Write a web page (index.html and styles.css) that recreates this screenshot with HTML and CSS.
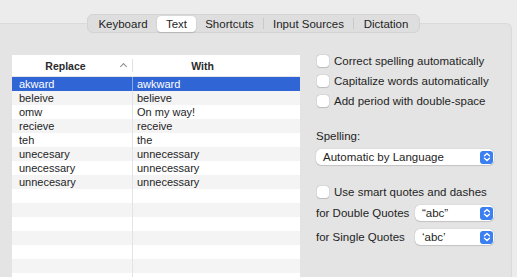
FILE: index.html
```html
<!DOCTYPE html>
<html>
<head>
  <title>Keyboard - Text</title>
  <link rel="stylesheet" href="styles.css">
</head>
<body>

  <!--TAB BAR-->
  <div class="tab-row">
    <div class="segmented">
      <span class="seg seg-keyboard">Keyboard</span>
      <span class="seg seg-text selected">Text</span>
      <span class="seg seg-shortcuts">Shortcuts</span>
      <span class="seg seg-input divided">Input Sources</span>
      <span class="seg seg-dictation divided">Dictation</span>
    </div>
  </div>

  <!--PANEL-->
  <div class="panel">

    <!-- Replacement table -->
    <div class="table">
      <div class="table-head">
        <div class="head-cell head-replace">Replace <span class="sort-arrow"></span></div>
        <div class="head-cell head-with">With</div>
      </div>
      <div class="row selected-row"><div class="cell">akward</div><div class="cell">awkward</div></div>
      <div class="row"><div class="cell">beleive</div><div class="cell">believe</div></div>
      <div class="row"><div class="cell">omw</div><div class="cell">On my way!</div></div>
      <div class="row"><div class="cell">recieve</div><div class="cell">receive</div></div>
      <div class="row"><div class="cell">teh</div><div class="cell">the</div></div>
      <div class="row"><div class="cell">unecesary</div><div class="cell">unnecessary</div></div>
      <div class="row"><div class="cell">unecessary</div><div class="cell">unnecessary</div></div>
      <div class="row"><div class="cell">unnecesary</div><div class="cell">unnecessary</div></div>
      <div class="row"><div class="cell"></div><div class="cell"></div></div>
      <div class="row"><div class="cell"></div><div class="cell"></div></div>
      <div class="row"><div class="cell"></div><div class="cell"></div></div>
      <div class="row"><div class="cell"></div><div class="cell"></div></div>
      <div class="row"><div class="cell"></div><div class="cell"></div></div>
      <div class="row"><div class="cell"></div><div class="cell"></div></div>
      <div class="row"><div class="cell"></div><div class="cell"></div></div>
    </div>

    <!-- Options on the right -->
    <div class="options">
      <div class="check-row"><span class="checkbox"></span>Correct spelling automatically</div>
      <div class="check-row"><span class="checkbox"></span>Capitalize words automatically</div>
      <div class="check-row"><span class="checkbox"></span>Add period with double-space</div>

      <div class="spelling-label">Spelling:</div>
      <div class="popup popup-wide">
        <span>Automatic by Language</span>
        <span class="stepper"><svg width="8" height="10" viewBox="0 0 8 10"><path d="M1.5 3.8 L4 1.5 L6.5 3.8 M1.5 6.2 L4 8.5 L6.5 6.2" fill="none" stroke="#fff" stroke-width="1.4" stroke-linecap="round" stroke-linejoin="round"/></svg></span>
      </div>

      <div class="check-row smart-row"><span class="checkbox"></span>Use smart quotes and dashes</div>
      <div class="quote-row">
        <span class="quote-label">for Double Quotes</span>
        <div class="popup popup-small">
          <span>&ldquo;abc&rdquo;</span>
          <span class="stepper"><svg width="8" height="10" viewBox="0 0 8 10"><path d="M1.5 3.8 L4 1.5 L6.5 3.8 M1.5 6.2 L4 8.5 L6.5 6.2" fill="none" stroke="#fff" stroke-width="1.4" stroke-linecap="round" stroke-linejoin="round"/></svg></span>
        </div>
      </div>
      <div class="quote-row">
        <span class="quote-label">for Single Quotes</span>
        <div class="popup popup-small">
          <span>&lsquo;abc&rsquo;</span>
          <span class="stepper"><svg width="8" height="10" viewBox="0 0 8 10"><path d="M1.5 3.8 L4 1.5 L6.5 3.8 M1.5 6.2 L4 8.5 L6.5 6.2" fill="none" stroke="#fff" stroke-width="1.4" stroke-linecap="round" stroke-linejoin="round"/></svg></span>
        </div>
      </div>
    </div>

  </div>

</body>
</html>
```

FILE: styles.css
```css
body {
  margin: 0;
  width: 517px;
  height: 277px;
  overflow: hidden;
  background-color: #ececec;
  font-family: "Liberation Sans", Arial, sans-serif;
  font-size: 11.5px;
  color: #1e1e1e;
}
/* Tab bar on top of the panel */
.tab-row {
  position: relative;
  z-index: 1;
  display: flex;
  padding: 14px 0 0 87px;
}
.segmented {
  display: flex;
  align-items: center;
  height: 19px;
  box-sizing: border-box;
  padding: 0 1px;
  background-color: #dedede;
  border: 1px solid #d3d3d3;
  border-radius: 6px;
}
.seg {
  position: relative;
  display: flex;
  align-items: center;
  justify-content: center;
  height: 16px;
  font-size: 11.5px;
  color: #1e1e1e;
}
.seg-keyboard { width: 68px; }
.seg-text { width: 39px; }
.seg-shortcuts { width: 67px; }
.seg-input { width: 89px; }
.seg-dictation { width: 64px; }
.seg.selected {
  background-color: #fff;
  border-radius: 4px;
  box-shadow: 0 0 1px rgba(0, 0, 0, 0.25), 0 1px 1px rgba(0, 0, 0, 0.12);
}
.seg.divided {
  border-left: 1px solid #c9c9c9;
  height: 11px;
}
/* Main panel, runs off the bottom of the window */
.panel {
  display: flex;
  margin: -10px 5px 0 -10px;
  padding: 31px 0 0 21px;
  height: 223px;
  background-color: #e4e4e4;
  border: 1px solid #dadada;
  border-bottom: none;
  border-radius: 6px 6px 0 0;
}
/* Replacement table */
.table {
  width: 288px;
  height: 100%;
  overflow: hidden;
  background-color: #fff;
  flex: none;
}
.table-head {
  display: flex;
  height: 22px;
  border-bottom: 1px solid #e6e6e6;
  box-sizing: border-box;
}
.head-cell {
  display: flex;
  align-items: center;
  justify-content: center;
  font-size: 10.5px;
  font-weight: bold;
  color: #2a2a2a;
}
.head-replace {
  position: relative;
  width: 121px;
  padding-right: 14px;
  box-sizing: border-box;
}
.head-replace::after {
  content: "";
  position: absolute;
  right: 0;
  top: 4px;
  bottom: 4px;
  border-right: 1px solid #e2e2e2;
}
.sort-arrow {
  position: absolute;
  right: 7px;
  top: 9px;
  width: 4px;
  height: 4px;
  border-left: 1px solid #8a8a8a;
  border-top: 1px solid #8a8a8a;
  transform: rotate(45deg);
}
.head-with {
  flex: 1;
  padding-right: 28px;
}
.row {
  display: flex;
  height: 14px;
  line-height: 14px;
  font-size: 11px;
}
.row:nth-child(odd) {
  background-color: #f4f4f4;
}
.cell {
  padding-left: 7px;
  white-space: nowrap;
}
.cell:first-child {
  width: 121px;
  box-sizing: border-box;
  border-right: 1px solid #e4e4e4;
}
.cell:last-child {
  padding-left: 4px;
}
.row.selected-row {
  background-color: #2f65d5;
  color: #fff;
}
.row.selected-row .cell:first-child {
  border-right-color: #8aa7e6;
}
/* Options column */
.options {
  padding: 0 0 0 16px;
  width: 180px;
}
.check-row {
  display: flex;
  align-items: center;
  height: 20px;
  margin-bottom: 0;
  white-space: nowrap;
}
.check-row:first-child {
  margin-top: -4px;
}
.checkbox {
  width: 12px;
  height: 12px;
  margin: 0 5px 0 1px;
  background-color: #fff;
  border-radius: 3px;
  box-shadow: 0 0 1px rgba(0, 0, 0, 0.35), 0 0.5px 1px rgba(0, 0, 0, 0.15);
}
.spelling-label {
  margin-top: 18px;
  height: 15px;
  line-height: 15px;
}
.popup {
  display: flex;
  align-items: center;
  justify-content: space-between;
  height: 16px;
  box-sizing: border-box;
  padding: 0 1px 0 7px;
  background-color: #fff;
  border-radius: 5px;
  box-shadow: 0 0 1px rgba(0, 0, 0, 0.3), 0 1px 1px rgba(0, 0, 0, 0.12);
}
.popup-wide {
  width: 178px;
  margin-top: 5px;
}
.popup-small {
  width: 79px;
}
.stepper {
  display: flex;
  align-items: center;
  justify-content: center;
  width: 13px;
  height: 13px;
  background-color: #3b7ff0;
  border-radius: 3px;
}
.smart-row {
  margin-top: 17px;
  margin-bottom: -1px;
}
.quote-row {
  display: flex;
  align-items: center;
  justify-content: space-between;
  width: 178px;
  height: 24px;
}
```
